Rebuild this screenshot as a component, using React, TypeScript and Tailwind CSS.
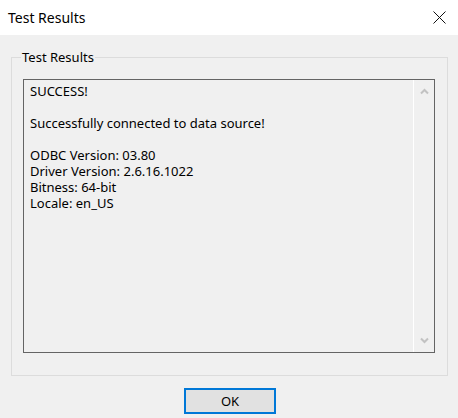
import React from "react";

const lines = [
  "SUCCESS!",
  "",
  "Successfully connected to data source!",
  "",
  "ODBC Version: 03.80",
  "Driver Version: 2.6.16.1022",
  "Bitness: 64-bit",
  "Locale: en_US",
];

function Chevron({ up }: { up?: boolean }) {
  return (
    <svg width="9" height="7" viewBox="0 0 9 7" className="block">
      <path
        d={up ? "M1 5.5 L4.5 2 L8 5.5" : "M1 1.5 L4.5 5 L8 1.5"}
        fill="none"
        stroke="#c2c2c2"
        strokeWidth="2"
      />
    </svg>
  );
}

export default function App() {
  return (
    <div
      className="flex h-[418px] w-[458px] flex-col bg-[#f0f0f0] text-black"
      style={{ fontFamily: '"Noto Sans", "Segoe UI", sans-serif' }}
    >
      {/* caption bar */}
      <div className="flex h-[35px] shrink-0 items-center justify-between bg-white pl-[8px] pr-[12px]">
        <span className="text-[14px] leading-none">Test Results</span>
        <svg width="13" height="13" viewBox="0 0 13 13">
          <path d="M0.5 0.5 L12.5 12.5 M12.5 0.5 L0.5 12.5" stroke="#111" strokeWidth="1" />
        </svg>
      </div>

      {/* group box */}
      <div className="ml-[11px] mr-[10px] mt-[22px] h-[319px] shrink-0">
        <div className="relative h-full border border-[#dcdcdc]">
          <span className="absolute left-[9px] top-[-9px] bg-[#f0f0f0] px-[1px] text-[13px] leading-[16px]">
            Test Results
          </span>
          <div className="ml-[11px] mr-[12px] mt-[21px] flex h-[274px] border border-[#646464]">
            <div className="flex-1 pl-[6px] pt-[3px] text-[13px] leading-[16px]">
              {lines.map((l, i) => (
                <div key={i} className="h-[16px] whitespace-pre">
                  {l}
                </div>
              ))}
            </div>
            <div className="flex w-[21px] flex-col items-center justify-between border-l border-white pb-[8px] pt-[8px]">
              <Chevron up />
              <Chevron />
            </div>
          </div>
        </div>
      </div>

      {/* buttons */}
      <div className="mt-[12px] flex justify-center pl-[2px]">
        <button className="h-[26px] w-[92px] border-2 border-[#0078d7] bg-[#e1e1e1] text-[13px] leading-none">
          OK
        </button>
      </div>
    </div>
  );
}
